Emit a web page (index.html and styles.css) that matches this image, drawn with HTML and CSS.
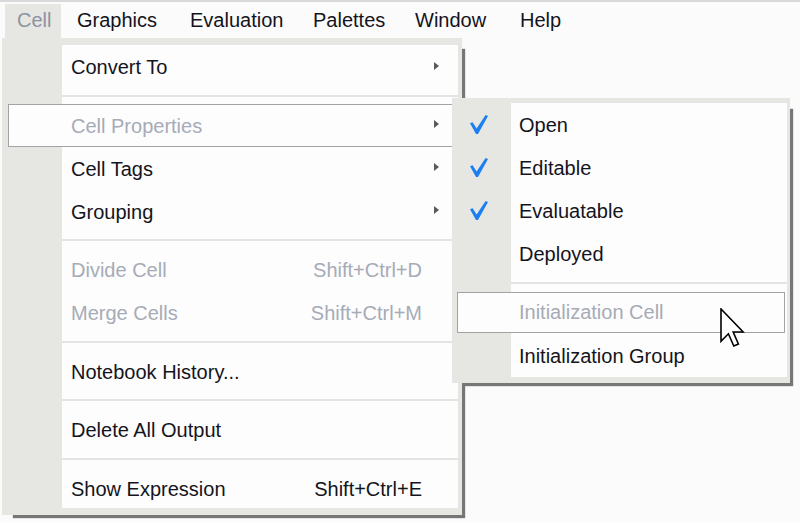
FILE: index.html
```html
<!DOCTYPE html>
<html>
<head>
<meta charset="utf-8">
<link rel="stylesheet" href="styles.css">
</head>
<body>
<div class="menubar">
  <div class="mb-item active">Cell</div>
  <div class="mb-item">Graphics</div>
  <div class="mb-item">Evaluation</div>
  <div class="mb-item">Palettes</div>
  <div class="mb-item">Window</div>
  <div class="mb-item">Help</div>
</div>

<div class="menu main-menu">
  <div class="panel">
    <div class="item"><span class="label">Convert To</span><span class="arrow"></span></div>
    <div class="sep"></div>
    <div class="item hl disabled"><span class="label">Cell Properties</span><span class="arrow"></span></div>
    <div class="item"><span class="label">Cell Tags</span><span class="arrow"></span></div>
    <div class="item"><span class="label">Grouping</span><span class="arrow"></span></div>
    <div class="sep"></div>
    <div class="item disabled"><span class="label">Divide Cell</span><span class="shortcut">Shift+Ctrl+D</span></div>
    <div class="item disabled"><span class="label">Merge Cells</span><span class="shortcut">Shift+Ctrl+M</span></div>
    <div class="sep"></div>
    <div class="item"><span class="label">Notebook History...</span></div>
    <div class="sep"></div>
    <div class="item"><span class="label">Delete All Output</span></div>
    <div class="sep"></div>
    <div class="item"><span class="label">Show Expression</span><span class="shortcut">Shift+Ctrl+E</span></div>
  </div>
</div>

<div class="menu sub-menu">
  <div class="panel">
    <div class="sitem"><span class="gut"><svg class="check" viewBox="0 0 18 19" width="18" height="19"><path d="M0,8.2 L2.6,7.2 L6.6,13.6 L15.6,0 L18,1 L8,19 L6,19 Z" fill="#1b7ff2"/></svg></span><span class="label">Open</span></div>
    <div class="sitem"><span class="gut"><svg class="check" viewBox="0 0 18 19" width="18" height="19"><path d="M0,8.2 L2.6,7.2 L6.6,13.6 L15.6,0 L18,1 L8,19 L6,19 Z" fill="#1b7ff2"/></svg></span><span class="label">Editable</span></div>
    <div class="sitem"><span class="gut"><svg class="check" viewBox="0 0 18 19" width="18" height="19"><path d="M0,8.2 L2.6,7.2 L6.6,13.6 L15.6,0 L18,1 L8,19 L6,19 Z" fill="#1b7ff2"/></svg></span><span class="label">Evaluatable</span></div>
    <div class="sitem"><span class="gut"></span><span class="label">Deployed</span></div>
    <div class="sep"></div>
    <div class="sitem hl disabled"><span class="gut"></span><span class="label">Initialization Cell</span></div>
    <div class="sitem"><span class="gut"></span><span class="label">Initialization Group</span></div>
  </div>
</div>

<svg class="cursor" viewBox="0 0 12.5 20" width="25" height="40">
  <path d="M0.5,0.5 V16.6 L4.2,12.9 L6.9,19 L9.2,18 L6.6,12 H11.6 Z" fill="#ffffff" stroke="#000000" stroke-width="0.8" stroke-linejoin="miter"/>
</svg>
</body>
</html>
```

FILE: styles.css
```css
* { box-sizing: border-box; }

html, body {
  margin: 0;
  padding: 0;
  width: 800px;
  height: 523px;
  overflow: hidden;
  background: #fbfbfb;
  font-family: "Liberation Sans", Arial, sans-serif;
  font-size: 20px;
  color: #14141c;
}

.menubar {
  height: 38px;
  border-top: 2px solid #d9d9d9;
  padding: 2px 0 0 5px;
  display: grid;
  grid-template-columns: 60px 113px 123px 102px 105px auto;
  background: #fbfbfb;
}

.mb-item {
  justify-self: start;
  height: 34px;
  line-height: 32px;
  padding: 0 10px 0 12px;
  white-space: nowrap;
}

.mb-item.active {
  background: #e6e6e3;
  color: #8d92a0;
}

.menu {
  position: absolute;
  background: #e6e6e3;
  box-shadow: 7px 7px 1px -4px #777777;
}

.main-menu {
  left: 2px;
  top: 38px;
  width: 460px;
  height: 477px;
  padding: 7px 4px 7px 60px;
}

.sub-menu {
  left: 452px;
  top: 98px;
  width: 338px;
  height: 285px;
  padding: 5px 3px 6px 59px;
}

.panel {
  background: #fdfdfd;
  height: 100%;
  display: flex;
  flex-direction: column;
}

.item {
  flex: none;
  height: 43px;
  line-height: 43px;
  display: flex;
  align-items: center;
  padding: 2px 19px 0 9px;
  white-space: nowrap;
}

.item .label { flex: 1; }

.item .shortcut {
  padding-right: 17px;
}

.arrow {
  width: 0;
  height: 0;
  border-left: 5px solid #5a5a5a;
  border-top: 4px solid transparent;
  border-bottom: 4px solid transparent;
  margin-top: -4px;
}

.disabled { color: #a6abb7; }

.item.hl {
  margin-left: -54px;
  padding-left: 62px;
  padding-right: 18px;
  border: 1px solid #a3a3a3;
  background: #fdfdfd;
}

.sep {
  flex: none;
  height: 15.5px;
  display: flex;
  align-items: center;
}

.sep::after {
  content: "";
  display: block;
  width: 100%;
  height: 2px;
  background: #e4e4e4;
}

.sitem {
  flex: none;
  height: 43px;
  line-height: 43px;
  display: flex;
  align-items: center;
  margin-left: -59px;
  padding-top: 2px;
  white-space: nowrap;
}

.sitem .gut {
  width: 59px;
  height: 41px;
  display: flex;
  align-items: center;
  padding-left: 18px;
}

.sitem .label {
  padding-left: 8px;
}

.check { margin-top: -2px; }

.sitem.hl {
  margin-left: -54px;
  margin-right: 2px;
  height: 41px;
  margin-top: 1px;
  margin-bottom: 1px;
  padding-top: 1px;
  border: 1px solid #a3a3a3;
  background: #fdfdfd;
}

.sitem.hl .gut {
  width: 53px;
  height: 38px;
}

.cursor {
  position: absolute;
  left: 720px;
  top: 308px;
}
```
